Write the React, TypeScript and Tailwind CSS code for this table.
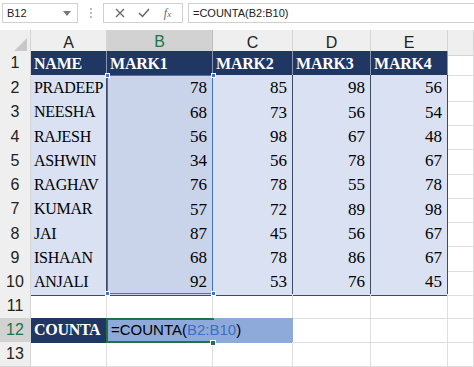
import React from "react";

const data: [string, number, number, number, number][] = [
  ["PRADEEP", 78, 85, 98, 56],
  ["NEESHA", 68, 73, 56, 54],
  ["RAJESH", 56, 98, 67, 48],
  ["ASHWIN", 34, 56, 78, 67],
  ["RAGHAV", 76, 78, 55, 78],
  ["KUMAR", 57, 72, 89, 98],
  ["JAI", 87, 45, 56, 67],
  ["ISHAAN", 68, 78, 86, 67],
  ["ANJALI", 92, 53, 76, 45],
];

const cols = "grid grid-cols-[31px_76px_106px_80px_78px_77px_1fr]";
const serif = { fontFamily: '"Liberation Serif", serif' };
const sans = { fontFamily: '"Liberation Sans", Arial, sans-serif' };

function RowHead({ n, active }: { n: number; active?: boolean }) {
  return (
    <div
      className={`flex items-center justify-center border-r border-b border-[#d5d5d5] text-[16px] ${
        active ? "bg-[#d2d2d2] text-[#217346]" : "bg-[#efefef] text-[#222]"
      }`}
      style={sans}
    >
      {n}
    </div>
  );
}

export default function App() {
  return (
    <div className="w-[474px] h-[367px] overflow-hidden bg-white relative">
      {/* Formula bar */}
      <div className="h-[30px] flex items-start pt-[3px] bg-white" style={sans}>
        <div className="ml-[2px] w-[76px] h-[20px] border border-[#d0d0d0] flex items-center justify-between px-[4px] text-[11px] text-[#222]">
          <span>B12</span>
          <svg width="8" height="5" viewBox="0 0 8 5" className="mr-[2px]">
            <path d="M0 0 L8 0 L4 5 Z" fill="#777" />
          </svg>
        </div>
        <div className="w-[25px] h-[20px] flex flex-col items-center justify-center gap-[2px]">
          <div className="w-[2px] h-[2px] bg-[#bbb]" />
          <div className="w-[2px] h-[2px] bg-[#bbb]" />
          <div className="w-[2px] h-[2px] bg-[#bbb]" />
        </div>
        <div className="w-[80px] h-[20px] border border-[#d0d0d0] flex items-center justify-around px-[4px]">
          <svg width="10" height="10" viewBox="0 0 10 10">
            <path d="M1 1 L9 9 M9 1 L1 9" stroke="#666" strokeWidth="1.3" />
          </svg>
          <svg width="12" height="10" viewBox="0 0 12 10">
            <path d="M1 5 L4.5 8.5 L11 1" stroke="#666" strokeWidth="1.5" fill="none" />
          </svg>
          <span className="text-[12px] italic text-[#666]" style={serif}>
            f<span className="text-[9px]">x</span>
          </span>
        </div>
        <div className="ml-[5px] flex-1 h-[20px] border border-r-0 border-[#d0d0d0] flex items-center pl-[4px] text-[11px] text-[#222]">
          =COUNTA(B2:B10)
        </div>
      </div>

      {/* Column headers */}
      <div className={`${cols} h-[21px]`} style={sans}>
        <div className="bg-[#efefef] border-r border-b border-[#d5d5d5] relative">
          <div className="absolute right-[3px] bottom-[3px] w-0 h-0 border-l-[14px] border-l-transparent border-b-[14px] border-b-[#c8c8c8]" />
        </div>
        {["A", "B", "C", "D", "E", ""].map((c) => (
          <div
            key={c || "F"}
            className={`flex items-center justify-center text-[16px] border-r ${
              c === "B"
                ? "bg-[#d2d2d2] text-[#217346] border-b-2 border-b-[#217346] border-r-[#bdbdbd]"
                : "bg-[#efefef] text-[#222] border-b border-[#d5d5d5]"
            }`}
          >
            {c}
          </div>
        ))}
      </div>

      <div className="relative">
        {/* Row 1 header */}
        <div className={`${cols} h-[24.25px]`}>
          <RowHead n={1} />
          {["NAME", "MARK1", "MARK2", "MARK3", "MARK4"].map((h) => (
            <div
              key={h}
              className="bg-[#203764] text-white font-bold text-[16px] tracking-[-0.2px] flex items-center pl-[3px] border-r border-[#8a96ad]"
              style={serif}
            >
              {h}
            </div>
          ))}
          <div className="border-b border-r border-[#dedede]" />
        </div>

        {data.map((r, i) => (
          <div key={r[0]} className={`${cols} h-[24.25px]`}>
            <RowHead n={i + 2} />
            <div
              className={`bg-[#d9e1f2] flex items-center pl-[3px] text-[16px] tracking-[-0.3px] text-black border-r border-r-[#3d4a66] border-b ${
                i === 8 ? "border-b-[#3d4a66]" : "border-b-[#eef1f8]"
              }`}
              style={serif}
            >
              {r[0]}
            </div>
            {r.slice(1).map((v, j) => (
              <div
                key={j}
                className={`${
                  j === 0 ? "bg-[#c9d3ea]" : "bg-[#d9e1f2]"
                } flex items-center justify-end pr-[5px] text-[17px] text-black border-r border-r-[#3d4a66] border-b ${
                  i === 8 ? "border-b-[#3d4a66]" : "border-b-[#eef1f8]"
                }`}
                style={serif}
              >
                {v}
              </div>
            ))}
            <div className="border-b border-r border-[#dedede]" />
          </div>
        ))}

        {/* Row 11 */}
        <div className={`${cols} h-[24.25px]`}>
          <RowHead n={11} />
          {[0, 1, 2, 3, 4, 5].map((k) => (
            <div key={k} className="border-b border-r border-[#dedede]" />
          ))}
        </div>

        {/* Row 12 */}
        <div className={`${cols} h-[24.25px]`}>
          <RowHead n={12} active />
          <div
            className="bg-[#203764] text-white font-bold text-[16px] tracking-[-0.3px] flex items-center pl-[3px] border-r border-[#203764]"
            style={serif}
          >
            COUNTA
          </div>
          <div className="col-span-2 bg-[#8eaadb] flex items-center pl-[4px] text-[15px] text-black whitespace-nowrap" style={sans}>
            =COUNTA(<span className="text-[#3a6fc4]">B2:B10</span>)
          </div>
          {[0, 1].map((k) => (
            <div key={k} className="border-b border-r border-[#dedede]" />
          ))}
          <div className="border-b border-r border-[#dedede]" />
        </div>

        {/* Row 13 */}
        <div className={`${cols} h-[24.25px]`}>
          <RowHead n={13} />
          {[0, 1, 2, 3, 4, 5].map((k) => (
            <div key={k} className="border-b border-r border-[#dedede]" />
          ))}
        </div>

        {/* Range selection B2:B10 */}
        <div className="absolute left-[107px] top-[24.25px] w-[106px] h-[218.25px] border-[1.5px] border-[#4472c4] pointer-events-none" />
        {[
          [104.5, 21.75],
          [210.5, 21.75],
          [104.5, 240],
          [210.5, 240],
        ].map(([x, y], k) => (
          <div
            key={k}
            className="absolute w-[5px] h-[5px] bg-[#4472c4] border border-white"
            style={{ left: x, top: y }}
          />
        ))}

        {/* Active cell B12 */}
        <div className="absolute left-[106px] top-[266.75px] w-[108px] h-[25px] border-2 border-r-0 border-[#217346] pointer-events-none" />
        <div className="absolute left-[210px] top-[289px] w-[6px] h-[6px] bg-[#217346] border border-white" />
      </div>
    </div>
  );
}
